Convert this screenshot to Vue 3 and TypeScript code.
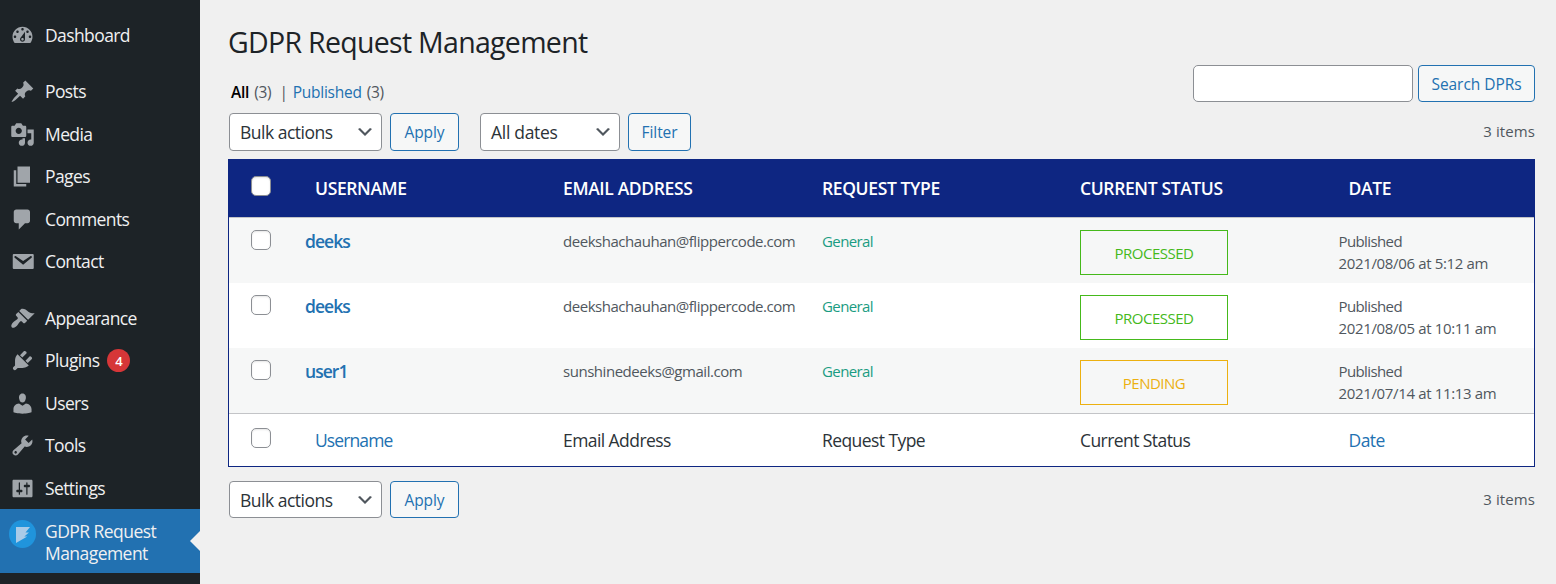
<script setup lang="ts">
interface MenuItem {
  label: string
  icon: string
  badge?: number
  gapBefore?: boolean
}

interface RequestRow {
  user: string
  email: string
  type: string
  status: 'processed' | 'pending'
  date: string
}

const menu: MenuItem[] = [
  { label: 'Dashboard', icon: 'M3.76 16h12.48c1.1-1.37 1.76-3.11 1.76-5 0-4.42-3.58-8-8-8s-8 3.58-8 8c0 1.89.66 3.63 1.76 5zM10 4c.55 0 1 .45 1 1s-.45 1-1 1-1-.45-1-1 .45-1 1-1zM6 6c.55 0 1 .45 1 1s-.45 1-1 1-1-.45-1-1 .45-1 1-1zm8 0c.55 0 1 .45 1 1s-.45 1-1 1-1-.45-1-1 .45-1 1-1zm-5.37 5.55L12 7v6c0 1.1-.9 2-2 2s-2-.9-2-2c0-.57.24-1.08.63-1.45zM4 10c.55 0 1 .45 1 1s-.45 1-1 1-1-.45-1-1 .45-1 1-1zm12 0c.55 0 1 .45 1 1s-.45 1-1 1-1-.45-1-1 .45-1 1-1zm-5 3c0-.55-.45-1-1-1s-1 .45-1 1 .45 1 1 1 1-.45 1-1z' },
  { label: 'Posts', gapBefore: true, icon: 'M10.44 3.02l1.82-1.82 6.36 6.35-1.83 1.82c-1.05-.68-2.48-.57-3.41.36l-.75.75c-.92.93-1.04 2.35-.35 3.41l-1.83 1.82-2.41-2.41-2.8 2.79c-.42.42-3.38 2.71-3.8 2.29s1.86-3.39 2.28-3.81l2.79-2.79L4.1 9.36l1.83-1.82c1.05.69 2.48.57 3.4-.36l.75-.75c.93-.92 1.05-2.35.36-3.41z' },
  { label: 'Media', icon: 'M13 11V4c0-.55-.45-1-1-1h-1.67L9 1H5L3.67 3H2c-.55 0-1 .45-1 1v7c0 .55.45 1 1 1h10c.55 0 1-.45 1-1zM7 4.5c1.38 0 2.5 1.12 2.5 2.5S8.38 9.5 7 9.5 4.5 8.38 4.5 7 5.62 4.5 7 4.5zM14 6h5v10.5c0 1.38-1.12 2.5-2.5 2.5S14 17.88 14 16.5s1.12-2.5 2.5-2.5c.17 0 .34.02.5.05V9h-3V6zm-4 8.05V13h2v3.5c0 1.38-1.12 2.5-2.5 2.5S7 17.88 7 16.5 8.12 14 9.5 14c.17 0 .34.02.5.05z' },
  { label: 'Pages', icon: 'M6 15V2h10v13H6zm-1 1h8v2H3V5h2v11z' },
  { label: 'Comments', icon: 'M5 2h9c1.1 0 2 .9 2 2v7c0 1.1-.9 2-2 2h-2l-5 5v-5H5c-1.1 0-2-.9-2-2V4c0-1.1.9-2 2-2z' },
  { label: 'Contact', icon: 'M3 4h15.200c.5 0 .8.300.8.800v10.400c0 .5-.3.800-.8.800H3c-.5 0-.8-.3-.8-.8V4.800c0-.5.3-.8.800-.8zm7.490 8.600l6.740-5.530c.24-.2.43-.66.13-1.070-.29-.41-.82-.42-1.170-.17l-5.700 3.860L4.800 5.830c-.35-.25-.88-.24-1.170.17-.3.41-.11.87.13 1.070z' },
  { label: 'Appearance', gapBefore: true, icon: 'M14.48 11.06L7.41 3.99l1.5-1.5c.5-.56 2.3-.47 3.51.32 1.21.8 1.43 1.28 2.91 2.1 1.18.64 2.45 1.26 4.45.85zm-.71.71L6.7 4.7 4.93 6.47c-.39.39-.39 1.02 0 1.41l1.06 1.06c.39.39.39 1.03 0 1.42-.6.6-1.43 1.11-2.21 1.69-.35.26-.7.53-1.01.84C1.43 14.23.4 16.08 1.4 17.07c.99 1 2.84-.03 4.18-1.36.31-.31.58-.66.85-1.02.57-.78 1.08-1.61 1.69-2.21.39-.39 1.02-.39 1.41 0l1.06 1.06c.39.39 1.02.39 1.41 0z' },
  { label: 'Plugins', badge: 4, icon: 'M13.11 4.36L9.87 7.6 8 5.73l3.24-3.24c.35-.34 1.05-.2 1.56.32.52.51.66 1.21.31 1.55zm-8 1.77l.91-1.12 9.01 9.01-1.19.84c-.71.71-2.63 1.16-3.82 1.16H6.14L4.9 17.26c-.59.59-1.54.59-2.12 0-.59-.58-.59-1.53 0-2.12l1.24-1.24v-3.88c0-1.13.4-3.19 1.09-3.89zm7.26 3.97l3.24-3.24c.34-.35 1.04-.21 1.55.31.52.51.66 1.21.31 1.55l-3.24 3.25z' },
  { label: 'Users', icon: 'M10 9.25c-2.27 0-2.73-3.44-2.73-3.44C7 4.02 7.82 2 9.97 2c2.16 0 2.98 2.02 2.71 3.81 0 0-.41 3.44-2.68 3.44zm0 2.57L12.72 10c2.39 0 4.52 2.33 4.52 4.53v2.49s-3.65 1.13-7.24 1.13c-3.65 0-7.24-1.13-7.24-1.13v-2.49c0-2.25 1.94-4.48 4.47-4.48z' },
  { label: 'Tools', icon: 'M16.68 9.77c-1.34 1.34-3.3 1.67-4.95.99l-5.41 6.52c-.99.99-2.59.99-3.58 0s-.99-2.59 0-3.57l6.52-5.42c-.68-1.65-.35-3.61.99-4.95 1.28-1.28 3.12-1.62 4.72-1.06l-2.89 2.89 2.82 2.82 2.86-2.87c.53 1.58.18 3.39-1.08 4.65zM3.81 16.21c.4.39 1.04.39 1.43 0 .4-.4.4-1.04 0-1.43-.39-.4-1.03-.4-1.43 0-.39.39-.39 1.03 0 1.43z' },
  { label: 'Settings', icon: 'M18 16V4c0-.55-.45-1-1-1H3c-.55 0-1 .45-1 1v12c0 .55.45 1 1 1h14c.55 0 1-.45 1-1zM8 11h1c.55 0 1 .45 1 1s-.45 1-1 1H8v1.5c0 .28-.22.5-.5.5s-.5-.22-.5-.5V13H6c-.55 0-1-.45-1-1s.45-1 1-1h1V5.5c0-.28.22-.5.5-.5s.5.22.5.5V11zm5-2h-1c-.55 0-1-.45-1-1s.45-1 1-1h1V5.5c0-.28.22-.5.5-.5s.5.22.5.5V7h1c.55 0 1 .45 1 1s-.45 1-1 1h-1v5.5c0 .28-.22.5-.5.5s-.5-.22-.5-.5V9z' },
]

const rows: RequestRow[] = [
  { user: 'deeks', email: 'deekshachauhan@flippercode.com', type: 'General', status: 'processed', date: '2021/08/06 at 5:12 am' },
  { user: 'deeks', email: 'deekshachauhan@flippercode.com', type: 'General', status: 'processed', date: '2021/08/05 at 10:11 am' },
  { user: 'user1', email: 'sunshinedeeks@gmail.com', type: 'General', status: 'pending', date: '2021/07/14 at 11:13 am' },
]
</script>

<template>
  <div class="admin">
    <nav class="sidebar">
      <a v-for="item in menu" :key="item.label" class="item" :class="{ spaced: item.gapBefore }">
        <svg class="icon" viewBox="0 0 20 20"><path :d="item.icon" fill-rule="evenodd" /></svg>
        <span class="label">{{ item.label }}</span>
        <span v-if="item.badge" class="badge">{{ item.badge }}</span>
      </a>
      <a class="item current">
        <svg class="logo" viewBox="0 0 27 28">
          <ellipse cx="13.500" cy="14" rx="13.500" ry="14" fill="#2094dc" />
          <path d="M7 7h14l-4.500 5.500h3.500L15.300 16.500h3L7 23z" fill="#a9cbe8" />
        </svg>
        <span class="two-line">GDPR Request<br />Management</span>
      </a>
    </nav>

    <main class="content">
      <h1>GDPR Request Management</h1>
      <div class="top">
        <div class="views">
          <b>All</b><span class="count">(3)</span><i>|</i><a>Published</a><span class="count">(3)</span>
        </div>
        <div class="search">
          <input type="text" />
          <button class="btn search-btn">Search DPRs</button>
        </div>
      </div>

      <div class="tablenav">
        <div class="select bulk"><span>Bulk actions</span><svg viewBox="0 0 20 20"><path d="M5 6l5 5 5-5 2 1-7 7-7-7 2-1z" /></svg></div>
        <button class="btn apply">Apply</button>
        <div class="select dates"><span>All dates</span><svg viewBox="0 0 20 20"><path d="M5 6l5 5 5-5 2 1-7 7-7-7 2-1z" /></svg></div>
        <button class="btn filter">Filter</button>
        <span class="total">3 items</span>
      </div>

      <section class="table">
        <div class="row head">
          <span class="check"></span>
          <span class="inset">USERNAME</span><span>EMAIL ADDRESS</span><span>REQUEST TYPE</span><span>CURRENT STATUS</span><span class="inset">DATE</span>
        </div>
        <div v-for="(row, i) in rows" :key="i" class="row body">
          <span class="check"></span>
          <a class="user">{{ row.user }}</a>
          <span class="email">{{ row.email }}</span>
          <span class="type">{{ row.type }}</span>
          <span class="status" :class="row.status">{{ row.status.toUpperCase() }}</span>
          <span class="date"><span class="state">Published</span><br />{{ row.date }}</span>
        </div>
        <div class="row foot">
          <span class="check"></span>
          <a class="inset username">Username</a><span>Email Address</span><span>Request Type</span><span>Current Status</span><a class="inset">Date</a>
        </div>
      </section>

      <div class="tablenav bottom">
        <div class="select bulk"><span>Bulk actions</span><svg viewBox="0 0 20 20"><path d="M5 6l5 5 5-5 2 1-7 7-7-7 2-1z" /></svg></div>
        <button class="btn apply">Apply</button>
        <span class="total">3 items</span>
      </div>
    </main>
  </div>
</template>

<style>
body {
  margin: 0;
  background: #f0f0f0;
}
</style>

<style scoped>
.admin {
  display: flex;
  width: 1556px;
  height: 584px;
  overflow: hidden;
  background: #f0f0f0;
  color: #50575e;
  font-family: "Open Sans", "Noto Sans", sans-serif;
  font-size: 15px;
  font-weight: 400;
  white-space: nowrap;
}
.admin * {
  box-sizing: border-box;
}
.sidebar {
  width: 200px;
  flex: none;
  padding-top: 14px;
  background: #1d2327;
}
.item {
  display: flex;
  align-items: center;
  height: 42.5px;
  padding-left: 10px;
  font-size: 17.500px;
  letter-spacing: -0.6px;
}
.label {
  padding-bottom: 1px;
}
.item.spaced {
  margin-top: 14px;
}
.icon {
  width: 25px;
  height: 25px;
  margin-right: 10px;
  fill: #a0a5aa;
}
.badge {
  width: 23px;
  height: 23px;
  margin-left: 8px;
  border-radius: 50%;
  background: #d63638;
  color: #fff;
  font-size: 13px;
  font-weight: 600;
  line-height: 24px;
  letter-spacing: 0;
  text-align: center;
}
.current {
  position: relative;
  height: 64px;
  margin-top: -0.5px;
  padding-left: 9px;
  background: #2271b1;
  letter-spacing: -0.55px;
}
.current::after {
  content: "";
  position: absolute;
  right: 0;
  top: 22px;
  border: 10px solid transparent;
  border-left: 0;
  border-right-color: #f0f0f0;
}
.logo {
  width: 27px;
  height: 28px;
  margin: -14px 9px 0 0;
}
.two-line {
  padding-top: 1px;
  line-height: 22px;
}
.content {
  flex: 1;
  padding: 22px 21px 0 28px;
}
h1 {
  margin: 0 0 1px;
  height: 40px;
  line-height: 41px;
  color: #1d2327;
  font-size: 28.500px;
  font-weight: 400;
  letter-spacing: -0.7px;
}
.top {
  display: flex;
  justify-content: space-between;
  height: 50px;
}
.views {
  display: flex;
  padding: 18px 0 0 3px;
  line-height: 22px;
  font-size: 15.500px;
  letter-spacing: -0.25px;
}
.views b {
  color: #000;
  font-weight: 600;
}
.views i {
  margin: 0 5px 0 8px;
  font-style: normal;
}
.count {
  margin-left: 5px;
}
a {
  color: #2271b1;
}
.item,
.item.current {
  color: #f0f0f1;
}
.search {
  display: flex;
  gap: 5px;
  padding-top: 2px;
}
.search input {
  width: 220px;
  height: 37px;
  border: 1px solid #8c8f94;
  border-radius: 5px;
  background: #fff;
}
.btn {
  height: 38px;
  padding: 0;
  border: 1px solid #2271b1;
  border-radius: 4px;
  background: #f6f7f7;
  color: #2271b1;
  font-family: inherit;
  font-size: 15.500px;
  letter-spacing: -0.05px;
}
.search-btn {
  width: 117px;
  height: 37px;
}
.tablenav {
  display: flex;
  align-items: center;
  height: 38px;
  padding-left: 1px;
}
.select {
  display: flex;
  align-items: center;
  justify-content: space-between;
  height: 100%;
  padding: 0 6px 0 10px;
  border: 1px solid #8c8f94;
  border-radius: 4px;
  background: #fff;
  color: #2c3338;
  font-size: 17.500px;
  letter-spacing: -0.5px;
}
.select svg {
  width: 20px;
  height: 20px;
  fill: #50575e;
}
.bulk {
  width: 153px;
}
.dates {
  width: 140px;
  margin-left: 21px;
}
.dates span {
  letter-spacing: -0.3px;
}
.apply {
  width: 69px;
  margin-left: 8px;
}
.filter {
  width: 63px;
  margin-left: 8px;
}
.total {
  margin-left: auto;
  padding-bottom: 2px;
  letter-spacing: 0.1px;
}
.table {
  width: 1307px;
  margin-top: 8px;
  border: 1px solid #0e2682;
  background: #fff;
}
.row {
  display: grid;
  grid-template-columns: 76px 258px 259px 258px 258.500px 1fr;
  color: #2c3338;
  font-size: 17.500px;
  letter-spacing: -0.57px;
}
.check {
  width: 20px;
  height: 20px;
  margin-left: 22px;
  border: 1px solid #8c8f94;
  border-radius: 5px;
  background: #fff;
  box-shadow: inset 0 1px 2px rgba(0, 0, 0, 0.1);
}
.inset {
  padding-left: 10px;
}
.username {
  letter-spacing: -0.9px;
}
.head {
  height: 58px;
  padding-top: 16px;
  border-bottom: 1px solid #c3c4c7;
  background: #0e2682;
  color: #fff;
  font-weight: 600;
  line-height: 25px;
  letter-spacing: -0.37px;
}
.body {
  height: 65px;
  padding-top: 12px;
  color: #50575e;
  font-size: 15px;
  line-height: 22px;
}
.body:nth-child(even) {
  background: #f6f7f7;
}
.user {
  font-size: 17.500px;
  font-weight: 600;
  letter-spacing: -0.95px;
}
.email {
  letter-spacing: -0.46px;
}
.type,
.state {
  letter-spacing: -0.6px;
}
.type {
  color: #1a9c82;
}
.date {
  letter-spacing: -0.35px;
}
.status {
  width: 148px;
  height: 45px;
  border: 1px solid;
  line-height: 45px;
  letter-spacing: -0.5px;
  text-align: center;
}
.processed {
  color: #45b91b;
}
.pending {
  color: #ecb010;
}
.foot {
  height: 53px;
  padding-top: 14px;
  border-top: 1px solid #c3c4c7;
  line-height: 25px;
}
.bottom {
  height: 37px;
  margin-top: 14px;
}
.bottom .btn {
  height: 37px;
}
</style>
